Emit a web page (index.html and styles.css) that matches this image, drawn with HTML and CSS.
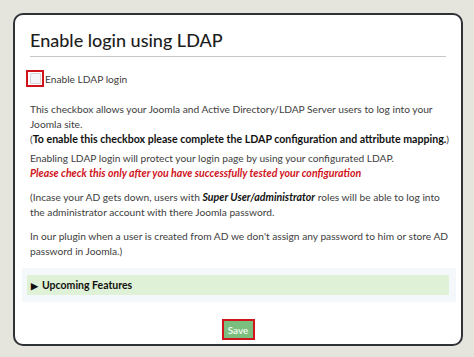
FILE: index.html
```html
<!DOCTYPE html>
<html lang="en">
<head>
    <meta charset="UTF-8">
    <title>Enable login using LDAP</title>
    <link rel="stylesheet" href="styles.css">
</head>
<body>
    <div class="ldap-card">
        <h2>Enable login using LDAP</h2>

        <label class="enable-row">
            <span class="check-box"><input type="checkbox" id="enableLdap"></span>
            Enable LDAP login
        </label>

        <p class="intro">This checkbox allows your Joomla and Active Directory/LDAP Server users to log into your Joomla site.<br>
        (<b>To enable this checkbox please complete the LDAP configuration and attribute mapping.</b>)</p>

        <p>Enabling LDAP login will protect your login page by using your configurated LDAP.<br>
        <b class="warn">Please check this only after you have successfully tested your configuration</b></p>

        <p>(Incase your AD gets down, users with <b><i>Super User/administrator</i></b> roles will be able to log into the administrator account with there Joomla password.</p>

        <p>In our plugin when a user is created from AD we don't assign any password to him or store AD password in Joomla.)</p>

        <div class="features">
            <div class="features-bar"><span class="arrow">&#9654;</span> Upcoming Features</div>
        </div>

        <div class="actions">
            <button type="submit" class="save-btn">Save</button>
        </div>
    </div>
</body>
</html>
```

FILE: styles.css
```css
* {
    margin: 0;
    padding: 0;
    box-sizing: border-box;
    font-family: Lato, "Open Sans", sans-serif;
}

body {
    background-color: #e6e5dd;
    padding: 13px 0 0 13px;
    color: #404040;
}

.ldap-card {
    width: 450px;
    background-color: #fff;
    border: 2px solid #2f3236;
    border-radius: 10px;
    padding: 14px 15px 4px 15px;
}

.ldap-card h2 {
    font-size: 18px;
    line-height: 22px;
    font-weight: 500;
    color: #1e1e1e;
    padding-bottom: 5px;
    border-bottom: 1px solid #c8c8c8;
    margin-bottom: 13px;
}

.enable-row {
    display: flex;
    align-items: center;
    height: 17px;
    font-size: 10.2px;
    margin-left: -4px;
    margin-bottom: 15px;
}

.check-box {
    display: flex;
    align-items: center;
    justify-content: center;
    width: 18px;
    height: 17px;
    border: 2px solid #d0141c;
    margin-right: 1px;
}

.check-box input {
    appearance: none;
    width: 11px;
    height: 11px;
    border: 1px solid #d3d6dc;
    border-radius: 1px;
    background: #f4f5f8;
}

.ldap-card p {
    font-size: 10.2px;
    line-height: 15px;
    margin: 0 -5px 9px 0;
}

.ldap-card p.intro {
    margin-bottom: 4px;
}

.ldap-card p b {
    color: #111;
    font-size: 10.6px;
    line-height: 14px;
}

.ldap-card p b.warn {
    color: #d0141c;
    font-style: italic;
}

.features {
    margin: 8px 0 0 -8px;
    width: 434px;
    padding: 7px 7px 7px 5px;
    background-color: #f5f8fb;
}

.features-bar {
    height: 20px;
    display: flex;
    align-items: center;
    gap: 4px;
    background-color: #dff2d7;
    padding: 0 4px;
    font-size: 10.5px;
    font-weight: bold;
    color: #111;
}

.arrow {
    font-size: 9px;
}

.actions {
    display: flex;
    justify-content: center;
    margin-top: 17px;
}

.save-btn {
    width: 33px;
    height: 21px;
    background-color: #7bbf7e;
    color: #f4fbf2;
    border: 2px solid #d0141c;
    font-size: 10px;
    font-weight: 600;
    cursor: pointer;
}
```
